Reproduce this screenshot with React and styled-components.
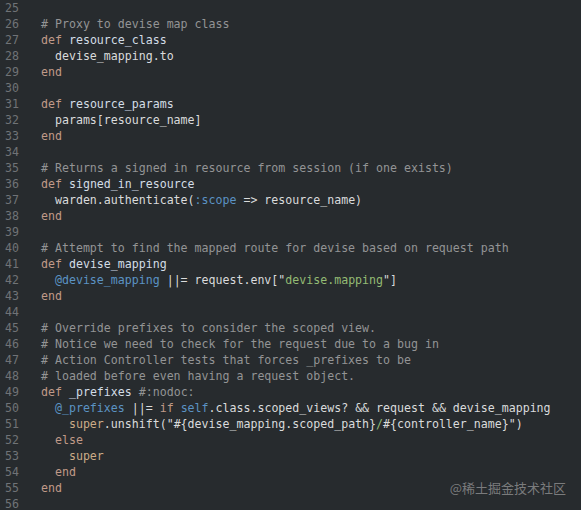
import React from 'react';
import styled, { createGlobalStyle } from 'styled-components';

const GlobalStyle = createGlobalStyle`
  html, body {
    margin: 0;
    padding: 0;
    background: #272b2e;
  }
`;

const Editor = styled.div`
  position: relative;
  width: 581px;
  height: 510px;
  overflow: hidden;
  background: #272b2e;
  font-family: 'DejaVu Sans Mono', 'Liberation Mono', monospace;
  font-size: 11.6px;
  line-height: 16px;
`;

const Row = styled.div`
  display: grid;
  grid-template-columns: 41px 1fr;
  height: 16px;
  white-space: pre;
`;

const Num = styled.span`
  padding-left: 5px;
  color: #707377;
`;

const Code = styled.span`
  color: #dadbdc;
`;

const colors = {
  kw: '#c09a88',
  fn: '#d3dde6',
  ivar: '#5b93c4',
  str: '#94bb74',
  cm: '#939495',
  self: '#5b93c4',
  sup: '#ccab88',
  sym: '#5b93c4',
};

const Tok = styled.span`
  color: ${({ $k }) => colors[$k] || '#dadbdc'};
`;

const Watermark = styled.div`
  position: absolute;
  right: 15px;
  bottom: 14px;
  font-family: 'Noto Sans CJK SC', sans-serif;
  font-size: 13px;
  line-height: 16px;
  color: rgba(160, 160, 160, 0.7);
`;

const lines = [
  [],
  [['cm', '# Proxy to devise map class']],
  [['kw', 'def'], ['', ' '], ['fn', 'resource_class']],
  [['', '  devise_mapping.to']],
  [['kw', 'end']],
  [],
  [['kw', 'def'], ['', ' '], ['fn', 'resource_params']],
  [['', '  params[resource_name]']],
  [['kw', 'end']],
  [],
  [['cm', '# Returns a signed in resource from session (if one exists)']],
  [['kw', 'def'], ['', ' '], ['fn', 'signed_in_resource']],
  [['', '  warden.authenticate('], ['sym', ':scope'], ['', ' => resource_name)']],
  [['kw', 'end']],
  [],
  [['cm', '# Attempt to find the mapped route for devise based on request path']],
  [['kw', 'def'], ['', ' '], ['fn', 'devise_mapping']],
  [['', '  '], ['ivar', '@devise_mapping'], ['', ' ||= request.env["'], ['str', 'devise.mapping'], ['', '"]']],
  [['kw', 'end']],
  [],
  [['cm', '# Override prefixes to consider the scoped view.']],
  [['cm', '# Notice we need to check for the request due to a bug in']],
  [['cm', '# Action Controller tests that forces _prefixes to be']],
  [['cm', '# loaded before even having a request object.']],
  [['kw', 'def'], ['', ' '], ['fn', '_prefixes'], ['', ' '], ['cm', '#:nodoc:']],
  [['', '  '], ['ivar', '@_prefixes'], ['', ' ||= '], ['kw', 'if'], ['', ' '], ['self', 'self'], ['', '.class.scoped_views? && request && devise_mapping']],
  [['', '    '], ['sup', 'super'], ['', '.unshift("#{devise_mapping.scoped_path}'], ['str', '/'], ['', '#{controller_name}")']],
  [['', '  '], ['kw', 'else']],
  [['', '    '], ['sup', 'super']],
  [['', '  '], ['kw', 'end']],
  [['kw', 'end']],
  [],
];

const App = () => (
  <Editor>
    <GlobalStyle />
    {lines.map((toks, i) => (
      <Row key={i}>
        <Num>{25 + i}</Num>
        <Code>
          {toks.map(([k, t], j) => (
            <Tok key={j} $k={k}>
              {t}
            </Tok>
          ))}
        </Code>
      </Row>
    ))}
    <Watermark>@稀土掘金技术社区</Watermark>
  </Editor>
);

export default App;
